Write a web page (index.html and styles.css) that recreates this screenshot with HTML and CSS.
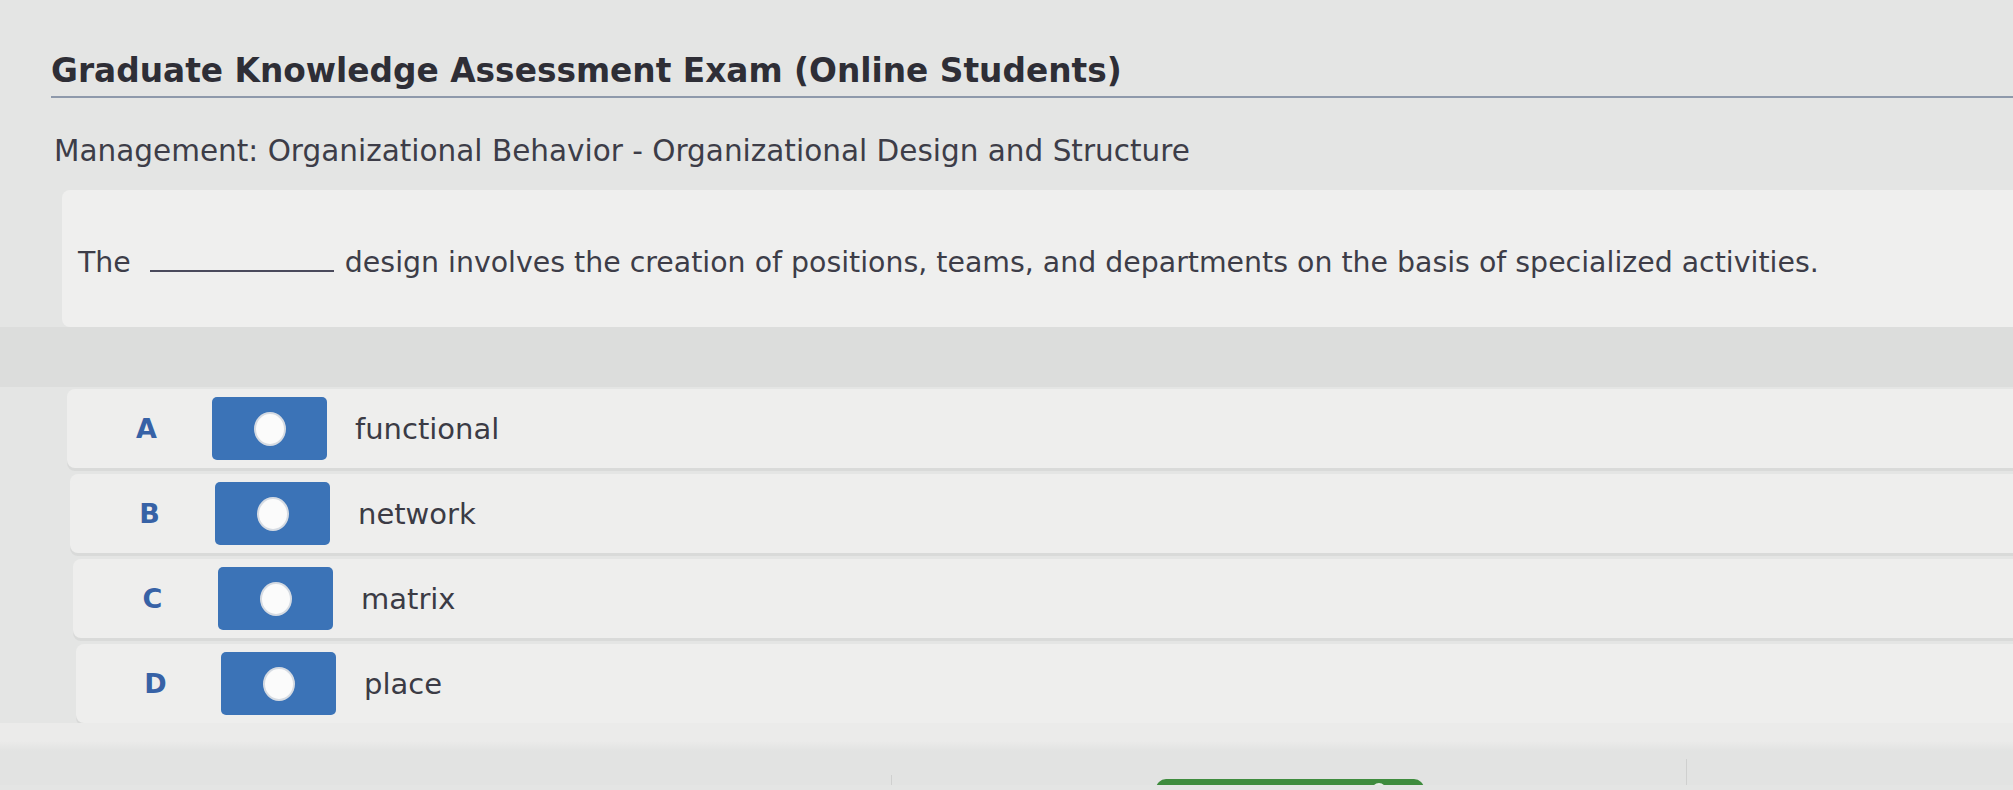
FILE: index.html
```html
<!DOCTYPE html>
<html lang="en">
<head>
  <meta charset="UTF-8">
  <title>Graduate Knowledge Assessment Exam</title>
  <link rel="stylesheet" href="styles.css">
</head>
<body>

  <div class="page">
    <h1 class="exam-title">Graduate Knowledge Assessment Exam (Online Students)</h1>

    <p class="topic">Management: Organizational Behavior - Organizational Design and Structure</p>

    <div class="question">
      The <span class="blank"></span> design involves the creation of positions, teams, and departments on the basis of specialized activities.
    </div>

    <div class="band"></div>

    <div class="options">
      <div class="option">
        <span class="letter">A</span>
        <button class="radio"><span class="dot"></span></button>
        <span class="answer">functional</span>
      </div>
      <div class="option">
        <span class="letter">B</span>
        <button class="radio"><span class="dot"></span></button>
        <span class="answer">network</span>
      </div>
      <div class="option">
        <span class="letter">C</span>
        <button class="radio"><span class="dot"></span></button>
        <span class="answer">matrix</span>
      </div>
      <div class="option">
        <span class="letter">D</span>
        <button class="radio"><span class="dot"></span></button>
        <span class="answer">place</span>
      </div>
    </div>

    <div class="footer">
      <button class="btn-next"><span class="btn-dot"></span></button>
    </div>
  </div>

</body>
</html>
```

FILE: styles.css
```css
body {
  margin: 0;
  background: #e4e5e4;
  color: #3b3b45;
  font-family: 'DejaVu Sans', Verdana, sans-serif;
  overflow: hidden;
}

.page {
  padding-top: 52px;
}

.exam-title {
  margin: 0 0 0 51px;
  padding-bottom: 6px;
  font-size: 32.8px;
  font-weight: bold;
  color: #2e2e36;
  border-bottom: 2px solid #8e99ab;
}

.topic {
  margin: 36px 0 0 54px;
  font-size: 29.5px;
  color: #3d3d48;
}

.question {
  margin: 22px 0 0 62px;
  padding: 56px 20px 48px 16px;
  background: #efefee;
  border-radius: 8px 0 0 8px;
  font-size: 28.4px;
  color: #3d3d48;
}

.blank {
  display: inline-block;
  width: 184px;
  border-bottom: 2px solid #4a4a5c;
  margin: 0 2px 0 10px;
}

.band {
  height: 60px;
  background: #dcdddc;
}

.options {
  display: flex;
  flex-direction: column;
  gap: 6px;
  padding: 2px 0 0 67px;
}

.option {
  display: flex;
  align-items: center;
  height: 79px;
  background: #eeeeed;
  border-radius: 8px 0 0 8px;
  box-shadow: 0 3px 0 #d9dad9;
}

.option:nth-child(2) { margin-left: 3px; }
.option:nth-child(3) { margin-left: 6px; }
.option:nth-child(4) { margin-left: 9px; }

.letter {
  flex: 0 0 145px;
  box-sizing: border-box;
  padding-left: 14px;
  text-align: center;
  font-size: 27px;
  font-weight: bold;
  color: #3762a6;
}

.radio {
  display: flex;
  align-items: center;
  justify-content: center;
  width: 115px;
  height: 63px;
  margin-right: 28px;
  border: none;
  border-radius: 5px;
  background: #3b73b7;
  padding: 0;
}

.dot {
  width: 28px;
  height: 30px;
  border-radius: 50%;
  background: #fbfbfb;
  box-shadow: 0 0 0 2px #d6dbe2;
}

.answer {
  font-size: 29px;
  color: #3b3b45;
}

.footer {
  position: relative;
  height: 62px;
  overflow: hidden;
  background: linear-gradient(to bottom, #ebebea 0, #ebebea 18px, #e2e3e2 28px);
}

.footer::before,
.footer::after {
  content: "";
  position: absolute;
  width: 1px;
  background: #cfd0cf;
  bottom: 0;
}

.footer::before { left: 891px; top: 52px; }
.footer::after { left: 1686px; top: 36px; }

.btn-next {
  position: absolute;
  left: 1156px;
  top: 56px;
  width: 268px;
  height: 50px;
  border: none;
  border-radius: 10px;
  background: #3f8c3e;
}

.btn-dot {
  position: absolute;
  left: 216px;
  top: 4px;
  width: 14px;
  height: 14px;
  border-radius: 50%;
  background: #e7efe6;
}
```
